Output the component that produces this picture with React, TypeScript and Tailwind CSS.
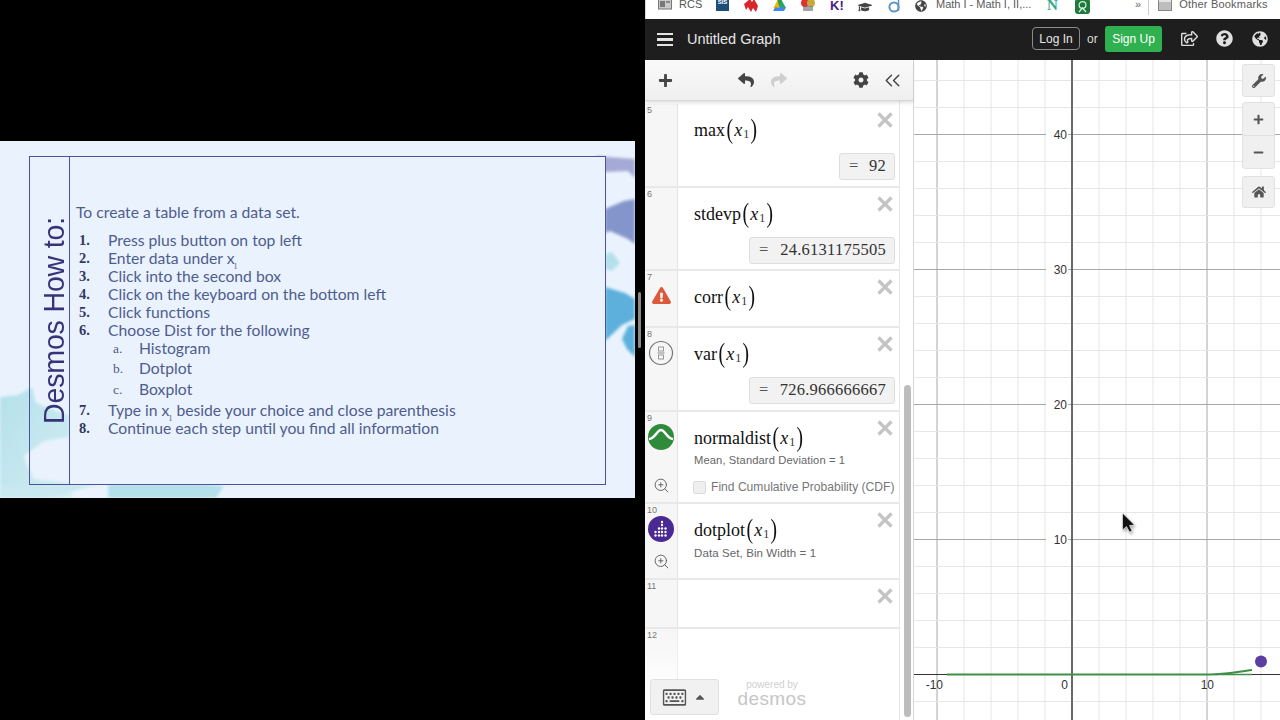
import React from "react";
import { ChevronsLeft, ZoomIn } from "lucide-react";
import {
  FaCog,
  FaExclamationTriangle,
  FaGlobeAmericas,
  FaHome,
  FaMinus,
  FaPlus,
  FaQuestionCircle,
  FaRegKeyboard,
  FaRegShareSquare,
  FaReply,
  FaShare,
  FaWrench,
  FaCaretUp,
  FaGraduationCap,
} from "react-icons/fa";

const sans = "font-['Liberation_Sans',Arial,sans-serif]";
const serif = "font-['Liberation_Serif','Times_New_Roman',serif]";

function Blobs() {
  return (
    <svg className="absolute inset-0" width="635" height="357" viewBox="0 0 635 357">
      <defs>
        <filter id="soft" x="-20%" y="-20%" width="140%" height="140%">
          <feGaussianBlur stdDeviation="1.6" />
        </filter>
        <linearGradient id="teal" x1="0" y1="0" x2="1" y2="1">
          <stop offset="0" stopColor="#b4e0ea" />
          <stop offset="1" stopColor="#d3edf3" />
        </linearGradient>
      </defs>
      <g filter="url(#soft)">
        <path d="M0 256 L18 254 L32 246 L36 262 L70 275 L72 357 L0 357 Z" fill="url(#teal)" />
        <path d="M24 315 L44 300 L70 296 L72 342 L34 338 L26 322 Z" fill="#eaf3fd" />
        <path d="M0 345 L100 343 L46 357 L0 357 Z" fill="#c9e8f0" />
        <path d="M108 343 L205 343 L224 345 L216 357 L108 357 Z" fill="#b3e0ea" />
        <path d="M596 15 L635 18 L635 37 L628 30 L605 31 L596 28 Z" fill="#a4a9d6" />
        <path d="M605 68 L624 60 L635 58 L635 103 L628 98 L610 90 L605 92 Z" fill="#8495cb" />
        <path d="M605 113 L612 111 L620 122 L612 130 L605 128 Z" fill="#b4e0ec" />
        <path d="M605 146 L625 152 L635 158 L635 178 L622 184 L605 200 Z" fill="#5bb0db" />
        <path d="M628 185 L635 184 L635 216 L627 208 L622 198 Z" fill="#5bb0db" />
      </g>
    </svg>
  );
}

function Num({ n, children, sub }: { n: string; children: React.ReactNode; sub?: boolean }) {
  return (
    <div className={"flex items-center " + (sub ? "h-[20.5px] pl-[37px]" : "h-[18px] pl-[3px]")}>
      <span
        className={
          serif +
          (sub
            ? " w-[26px] text-[13.5px] text-[#4f5a86]"
            : " w-[29px] text-[14.5px] font-bold text-[#33395f]")
        }
      >
        {n}
      </span>
      <span className="whitespace-nowrap">{children}</span>
    </div>
  );
}

function Slide() {
  const sub = <sub className={serif + " text-[8px] leading-none -ml-[1px] align-[-3px]"}>1</sub>;
  return (
    <div className="relative w-[635px] h-[357px] mt-[141px] bg-[#eaf3fd] overflow-hidden">
      <Blobs />
      <div className="relative ml-[29px] mt-[15px] w-[577px] h-[329px] border border-[#4d5299] flex">
        <div className="w-[40px] h-full border-r border-[#4d5299] flex items-center justify-center">
          <span
            className={
              sans +
              " [writing-mode:vertical-rl] rotate-180 text-[28.6px] leading-none text-[#373379] tracking-[-0.2px] whitespace-nowrap ml-[9px]"
            }
          >
            Desmos How to:
          </span>
        </div>
        <div className="flex-1 bg-[#eaf3fd] pl-[6px] pt-[45.5px] font-['Lato',sans-serif] text-[15.7px] text-[#4f5c8f]">
          <div className="h-[18px] leading-[18px] mb-[11px]">To create a table from a data set.</div>
          <Num n="1.">Press plus button on top left</Num>
          <Num n="2.">Enter data under x{sub}</Num>
          <Num n="3.">Click into the second box</Num>
          <Num n="4.">Click on the keyboard on the bottom left</Num>
          <Num n="5.">Click functions</Num>
          <Num n="6.">Choose Dist for the following</Num>
          <div className="-mt-[1px] mb-[1.5px]">
            <Num n="a." sub>Histogram</Num>
            <Num n="b." sub>Dotplot</Num>
            <Num n="c." sub>Boxplot</Num>
          </div>
          <Num n="7.">Type in x{sub} beside your choice and close parenthesis</Num>
          <Num n="8.">Continue each step until you find all information</Num>
        </div>
      </div>
    </div>
  );
}

function Bookmarks() {
  return (
    <div className={sans + " h-[19px] bg-white overflow-hidden text-[11px] leading-[14px] text-[#5a5a5a] border-l border-[#d8d8d8]"}>
      <div className="flex items-start -mt-[3px] h-[22px]">
        <svg className="ml-[12px] mt-[-2px]" width="14" height="16" viewBox="0 0 14 16">
          <rect x="0.5" y="1" width="13" height="13" fill="#c9c9c9" stroke="#777" />
          <rect x="2" y="6" width="5" height="6" fill="#777" />
          <rect x="8" y="6" width="4" height="2" fill="#888" />
        </svg>
        <span className="ml-[7px] w-[21px] text-[#555]">RCS</span>
        <span className="ml-[16px] mt-[-2px] w-[13px] h-[16px] bg-[#1f4e79] text-white text-[6px] font-bold text-center leading-[14px]">SIS</span>
        <svg className="ml-[15px] mt-[2px]" width="14" height="13" viewBox="0 0 14 13">
          <path d="M0 5 L6 0 L8 3 L10 0 L14 7 L12 13 L9 9 L7 13 L4 8 L2 11 Z" fill="#d8262c" />
        </svg>
        <svg className="ml-[15px] mt-[3px]" width="13" height="12" viewBox="0 0 13 12">
          <path d="M4.5 0 H8.5 L6.5 6 L4 11 L0.5 8 Z" fill="#f4b400" />
          <path d="M8.5 0 L13 8 H6.5 L4.5 0 Z" fill="#0f9d58" opacity="0.9" />
          <path d="M0 11 L2.2 7.5 H13 L11 11 Z" fill="#4285f4" />
        </svg>
        <svg className="ml-[15px] mt-[2px]" width="14" height="13" viewBox="0 0 14 13">
          <circle cx="4" cy="4" r="4" fill="#d33" />
          <circle cx="10" cy="4" r="4" fill="#c6a93a" />
          <rect x="2" y="7" width="10" height="5" fill="#667" opacity="0.6" />
        </svg>
        <span className="ml-[15px] mt-[2px] w-[12px] text-[#4b1a8c] text-[13px] font-bold">K!</span>
        <span className="ml-[16px] mt-[3px] text-[#444] text-[14px]"><FaGraduationCap /></span>
        <svg className="ml-[16px] mt-[2px]" width="12" height="14" viewBox="0 0 12 14">
          <circle cx="6" cy="8" r="4.6" fill="none" stroke="#5f95c0" strokeWidth="2" />
          <path d="M10.5 0 V12" stroke="#5f95c0" strokeWidth="1.5" />
        </svg>
        <span className="ml-[15px] mt-[3px] text-[#444] text-[12px]"><FaGlobeAmericas /></span>
        <span className="ml-[9px] w-[96px] whitespace-nowrap">Math I - Math I, II,...</span>
        <span className={serif + " ml-[15px] w-[13px] text-[#2fa98f] text-[15px] font-bold mt-[1px]"}>N</span>
        <svg className="ml-[15px] mt-[2px]" width="15" height="15" viewBox="0 0 15 15">
          <rect width="15" height="15" rx="3" fill="#1f7a3d" />
          <circle cx="7.5" cy="6" r="3.4" fill="none" stroke="#d8f0df" strokeWidth="1.2" />
          <path d="M4 13 L7.5 9 L11 13" fill="none" stroke="#d8f0df" strokeWidth="1.2" />
        </svg>
        <span className="ml-[45px] text-[#666]">»</span>
        <span className="ml-[7px] w-px h-[18px] bg-[#ccc]" />
        <svg className="ml-[9px] mt-[2px]" width="14" height="12" viewBox="0 0 14 12">
          <rect x="0.5" y="0.5" width="13" height="11" fill="#bdbdbd" stroke="#888" />
          <rect x="1" y="1" width="12" height="2" fill="#e4e4e4" />
        </svg>
        <span className="ml-[7px] whitespace-nowrap tracking-[0.2px]">Other Bookmarks</span>
      </div>
    </div>
  );
}

function Header() {
  return (
    <div className={sans + " h-[41px] bg-[#1e1e1e] flex items-center text-[#e6e6e6]"}>
      <div className="ml-[12px] w-[16px] flex flex-col gap-[3px]">
        <span className="h-[2.5px] bg-[#e4e4e4]" />
        <span className="h-[2.5px] bg-[#e4e4e4]" />
        <span className="h-[2.5px] bg-[#e4e4e4]" />
      </div>
      <span className="ml-[14px] w-[91px] text-[14.5px] whitespace-nowrap">Untitled Graph</span>
      <div className="ml-[254px] -mt-[2px] w-[48px] h-[23px] border border-[#8a8a8a] rounded-[4px] flex items-center justify-center text-[12px]">
        Log In
      </div>
      <span className="ml-[7px] -mt-[2px] w-[11px] text-[12px] text-[#ddd]">or</span>
      <div className="ml-[7px] -mt-[2px] w-[57px] h-[26px] bg-[#2fb14f] rounded-[3px] flex items-center justify-center text-[12px] text-white">
        Sign Up
      </div>
      <FaRegShareSquare className="ml-[19px] -mt-[2px] text-[17px] text-[#dcdcdc]" />
      <FaQuestionCircle className="ml-[18px] -mt-[2px] text-[17px] text-[#e0e0e0]" />
      <FaGlobeAmericas className="ml-[19px] -mt-[2px] text-[16px] text-[#e0e0e0]" />
    </div>
  );
}

function Math({ name }: { name: string }) {
  return (
    <div className={serif + " flex items-center h-[30px] text-[18px] text-[#111]"}>
      <span>{name}</span>
      <span className="text-[28px] font-light leading-none -mt-[3px] scale-x-[0.7]">(</span>
      <span className="italic text-[18px]">x</span>
      <span className="text-[12px] mt-[8px] ml-[1px] text-[#333]">1</span>
      <span className="text-[28px] font-light leading-none -mt-[3px] scale-x-[0.7]">)</span>
    </div>
  );
}

function Close({ top }: { top: number }) {
  return (
    <svg className="absolute right-[6px]" style={{ top }} width="16" height="16" viewBox="0 0 16 16">
      <path d="M1.5 1.5 L14.5 14.5 M14.5 1.5 L1.5 14.5" stroke="#c4c4c4" strokeWidth="3.2" />
    </svg>
  );
}

function Output({ value, w }: { value: string; w: string }) {
  return (
    <div
      className={
        serif +
        " self-end mr-[4px] mt-[8px] h-[27px] " +
        w +
        " bg-[#f2f2f2] border border-[#dedede] rounded-[3px] flex items-center justify-between pl-[9px] pr-[8px] text-[16.5px] text-[#333] tracking-[0.25px]"
      }
    >
      <span className="text-[#555]">=</span>
      <span>{value}</span>
    </div>
  );
}

function Row({
  n,
  h,
  icon,
  second,
  children,
}: {
  n: string;
  h: string;
  icon?: React.ReactNode;
  second?: React.ReactNode;
  children?: React.ReactNode;
}) {
  return (
    <div className={"relative flex border-b-2 border-[#e8e8e8] " + h}>
      <div className="w-[33px] border-r border-[#e4e4e4] flex flex-col bg-[#f6f6f6]">
        <span className={sans + " pl-[2px] pt-[1px] text-[9px] leading-[10px] text-[#777] h-[11px]"}>{n}</span>
        <div className="flex justify-center mt-[1px]">{icon}</div>
        <div className="flex justify-center">{second}</div>
      </div>
      <div className="flex-1 min-w-0 pl-[16px] pt-[11px] flex flex-col">{children}</div>
      <Close top={8} />
    </div>
  );
}

function GutterIcon({ kind }: { kind: "frac" | "normal" | "dot" }) {
  if (kind === "frac")
    return (
      <svg width="26" height="26" viewBox="0 0 26 26">
        <circle cx="13" cy="13" r="11.5" fill="none" stroke="#777" strokeWidth="1.2" />
        <rect x="10.5" y="7" width="5" height="4" fill="none" stroke="#999" />
        <path d="M9.5 13 H16.5" stroke="#888" />
        <rect x="10.5" y="15" width="5" height="4" fill="none" stroke="#999" />
      </svg>
    );
  if (kind === "normal")
    return (
      <svg width="26" height="26" viewBox="0 0 26 26">
        <circle cx="13" cy="13" r="13" fill="#2f8a3c" />
        <path d="M1 15 C7 15 9 6 13 6 C17 6 19 15 25 15" fill="none" stroke="#fff" strokeWidth="2.6" />
      </svg>
    );
  const dots: [number, number][] = [];
  for (const [x, ys] of [
    [8, [15, 18.5]],
    [11.5, [11.5, 15, 18.5]],
    [14.5, [5, 8, 11.5, 15, 18.5]],
    [18, [11.5, 15, 18.5]],
  ] as [number, number[]][])
    for (const y of ys) dots.push([x, y]);
  return (
    <svg width="26" height="26" viewBox="0 0 26 26">
      <circle cx="13" cy="13" r="13" fill="#4a2a92" />
      {dots.map(([x, y], i) => (
        <circle key={i} cx={x - 0.5} cy={y + 1} r="1.2" fill="#fff" />
      ))}
    </svg>
  );
}

function Sidebar() {
  return (
    <div className="relative w-[269px] h-full bg-white border-r border-[#d8d8d8]">
      <div className="relative z-10 h-[41px] bg-linear-to-b from-[#fafafa] to-[#efefef] border-b border-[#d6d6d6] shadow-[0_2px_3px_rgba(0,0,0,0.12)] flex items-center text-[#444]">
        <FaPlus className="ml-[13px] text-[15px]" />
        <FaReply className="ml-[65px] text-[16px] text-[#444]" />
        <FaShare className="ml-[17px] text-[16px] text-[#cfcfcf]" />
        <FaCog className="ml-[66px] text-[16px] text-[#444]" />
        <ChevronsLeft className="ml-[11px] text-[#444]" size={25} strokeWidth={1.4} />
      </div>
      <div className="flex h-[619px] overflow-hidden">
        <div className="w-[255px] pt-[3px] border-r border-[#e8e8e8]">
          <Row n="5" h="h-[84px]">
            <Math name="max" />
            <Output value="92" w="w-[56px]" />
          </Row>
          <Row n="6" h="h-[83px]">
            <Math name="stdevp" />
            <Output value="24.6131175505" w="w-[146px]" />
          </Row>
          <Row n="7" h="h-[57px]" icon={<FaExclamationTriangle className="mt-[3px] text-[19px] text-[#dc5a3c]" />}>
            <Math name="corr" />
          </Row>
          <Row n="8" h="h-[84px]" icon={<GutterIcon kind="frac" />}>
            <Math name="var" />
            <Output value="726.966666667" w="w-[146px]" />
          </Row>
          <Row
            n="9"
            h="h-[92px]"
            icon={<GutterIcon kind="normal" />}
            second={<ZoomIn className="mt-[27px] text-[#666]" size={17} strokeWidth={1.4} />}
          >
            <Math name="normaldist" />
            <div className={sans + " text-[11.2px] leading-[14px] text-[#666] tracking-[0.1px]"}>
              Mean, Standard Deviation = 1
            </div>
            <div className={sans + " mt-[13px] -ml-[1px] flex items-center text-[12.1px] leading-[14px] text-[#777]"}>
              <span className="w-[13px] h-[13px] bg-[#efefef] border border-[#dcdcdc] rounded-[2px]" />
              <span className="ml-[5px] whitespace-nowrap">Find Cumulative Probability (CDF)</span>
            </div>
          </Row>
          <Row
            n="10"
            h="h-[76px]"
            icon={<GutterIcon kind="dot" />}
            second={<ZoomIn className="mt-[11px] text-[#666]" size={17} strokeWidth={1.4} />}
          >
            <Math name="dotplot" />
            <div className={sans + " mt-[1px] text-[11.5px] leading-[14px] text-[#666] tracking-[0.1px]"}>
              Data Set, Bin Width = 1
            </div>
          </Row>
          <Row n="11" h="h-[49px]" />
          <div className="flex h-[70px]">
            <div className="w-[33px] border-r border-[#eeeeee] bg-linear-to-b from-[#f6f6f6] to-white">
              <span className={sans + " block pl-[2px] pt-[1px] text-[9px] leading-[10px] text-[#777]"}>12</span>
            </div>
          </div>
        </div>
        <div className="pl-[4px] pt-[284px]">
          <div className="w-[7px] h-[332px] rounded-full bg-[#bdbdbd]" />
        </div>
      </div>
      <div className="absolute left-[5px] bottom-[5px] z-10 w-[69px] h-[36px] bg-[#f1f1f1] border border-[#e0e0e0] rounded-[3px] flex items-center justify-center gap-[6px] text-[#555]">
        <FaRegKeyboard className="text-[25px] scale-x-[0.95]" />
        <FaCaretUp className="text-[14px]" />
      </div>
      <div className={sans + " absolute left-[92px] bottom-[14px] w-[70px] flex flex-col items-center text-[#cfcfcf]"}>
        <span className="text-[10px] leading-[12px]">powered by</span>
        <span className="text-[19px] leading-[15px] tracking-[0.4px] text-[#c6c6c6]">desmos</span>
      </div>
    </div>
  );
}

function Graph() {
  const ox = 158;
  const oy = 614.5;
  const step = 27;
  const vs: number[] = [];
  for (let i = -6; i <= 8; i++) vs.push(ox + i * step);
  const hs: number[] = [];
  for (let i = -3; i <= 23; i++) hs.push(oy - i * step);
  return (
    <div className="relative flex-1 h-full bg-white overflow-hidden">
      <svg className="absolute inset-0" width="366" height="660" viewBox="0 0 366 660">
        {vs.map((x, i) => (
          <line key={i} x1={x} x2={x} y1={0} y2={660} stroke={(i - 6) % 5 === 0 ? "#a8a8a8" : "#e6e6e6"} strokeWidth="1" />
        ))}
        {hs.map((y, i) => (
          <line key={i} x1={0} x2={366} y1={y} y2={y} stroke={(i - 3) % 5 === 0 ? "#a8a8a8" : "#e6e6e6"} strokeWidth="1" />
        ))}
        <line x1={ox} x2={ox} y1={0} y2={660} stroke="#222" strokeWidth="1.2" />
        <line x1={0} x2={366} y1={oy} y2={oy} stroke="#333" strokeWidth="1.2" />
        <path d="M33 614.5 H296 C310 614.5 322 612 338 610" fill="none" stroke="#3f8f47" strokeWidth="2" />
        <path d="M300 614.5 H338" fill="none" stroke="#3f8f47" strokeWidth="1.5" />
        <circle cx="347" cy="601.5" r="6" fill="#5a3ea0" />
        <g fontFamily="'Liberation Sans', Arial, sans-serif" fontSize="12" fill="#333" textAnchor="end">
          <rect x="132" y="66" width="22" height="16" fill="#fff" />
          <text x="153" y="79">40</text>
          <rect x="132" y="201" width="22" height="16" fill="#fff" />
          <text x="153" y="214">30</text>
          <rect x="132" y="336" width="22" height="16" fill="#fff" />
          <text x="153" y="349">20</text>
          <rect x="132" y="471" width="22" height="16" fill="#fff" />
          <text x="153" y="484">10</text>
          <text x="29" y="629">-10</text>
          <text x="154" y="629">0</text>
          <text x="300" y="629">10</text>
        </g>
        <path
          d="M208.5 453 V470 L212.5 466.5 L215.5 472 L218 471 L215.5 465.5 L220.5 465 Z"
          fill="#111"
          stroke="#fff"
          strokeWidth="0.6"
          style={{ filter: "drop-shadow(1px 2px 1.5px rgba(0,0,0,0.35))" }}
        />
      </svg>
      <div className="absolute top-[4px] right-[5px] w-[33px] flex flex-col text-[#555]">
        <div className="h-[33px] bg-[#f0f0f0] border border-[#e2e2e2] rounded-[3px] flex items-center justify-center">
          <FaWrench className="text-[14px]" />
        </div>
        <div className="mt-[5px] h-[67px] bg-[#f0f0f0] border border-[#e2e2e2] rounded-[3px] flex flex-col">
          <div className="flex-1 flex items-center justify-center border-b border-[#e2e2e2]">
            <FaPlus className="text-[11px]" />
          </div>
          <div className="flex-1 flex items-center justify-center">
            <FaMinus className="text-[11px]" />
          </div>
        </div>
        <div className="mt-[7px] h-[32px] bg-[#f0f0f0] border border-[#e2e2e2] rounded-[3px] flex items-center justify-center">
          <FaHome className="text-[14px]" />
        </div>
      </div>
    </div>
  );
}

export default function App() {
  return (
    <div className="w-[1280px] h-[720px] flex bg-black overflow-hidden">
      <div className="relative w-[645px] h-full">
        <Slide />
        <div className="absolute left-[638px] top-[292px] w-[3px] h-[56px] rounded-full bg-[#8a8a8a]" />
      </div>
      <div className="w-[635px] h-full flex flex-col">
        <Bookmarks />
        <Header />
        <div className="flex h-[660px]">
          <Sidebar />
          <Graph />
        </div>
      </div>
    </div>
  );
}
